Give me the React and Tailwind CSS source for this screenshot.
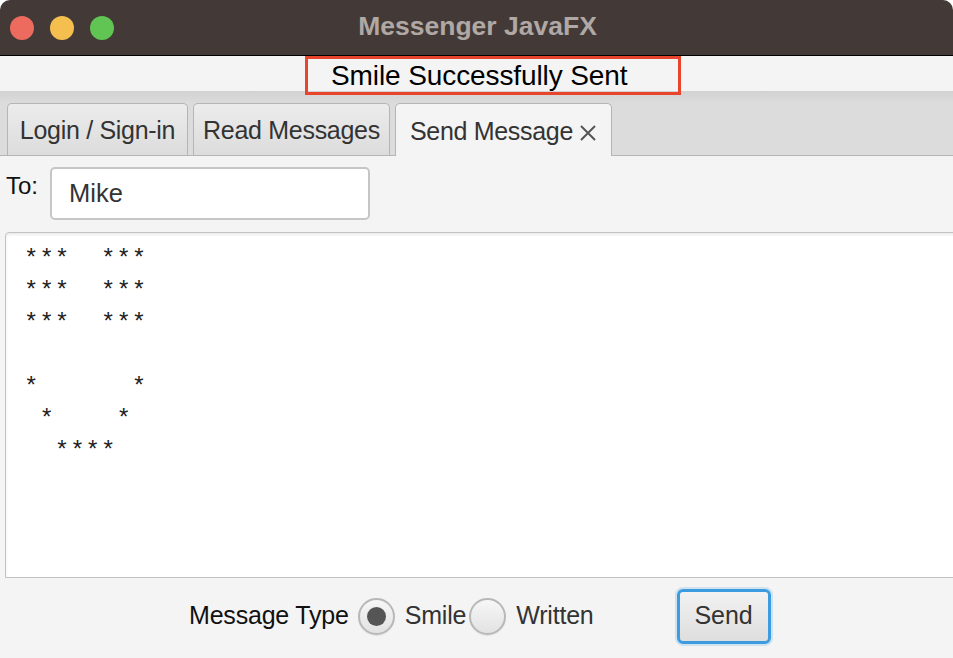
import { useState } from "react";

const smile = ["***  ***", "***  ***", "***  ***", "", "*      *", " *    *", "  ****"];

const Tab = ({ label, active, closable, width }) => (
  <div
    className={
      "h-[52px] shrink-0 flex items-center justify-center gap-[6px] pt-[3px] rounded-t-[5px] border border-b-0 border-[#b5b5b5] text-[25px] tracking-[-0.3px] text-[#333] " +
      width +
      (active ? " bg-[#f4f4f4] h-[53px] mb-[-1px] relative z-10" : " bg-gradient-to-b from-[#ececec] to-[#dcdcdc]")
    }
  >
    <span>{label}</span>
    {closable ? (
      <svg width="18" height="18" viewBox="0 0 18 18" className="mt-[2px]">
        <path d="M2 2 L16 16 M16 2 L2 16" stroke="#555" strokeWidth="2" />
      </svg>
    ) : null}
  </div>
);

const Radio = ({ checked }) => (
  <div className="w-[37px] h-[37px] rounded-full border-[2px] border-[#b8b8b8] bg-gradient-to-b from-[#f7f7f7] to-[#e2e2e2] flex items-center justify-center shadow-[0_1px_1px_rgba(0,0,0,0.08)]">
    {checked ? <div className="w-[19px] h-[19px] rounded-full bg-[#555]" /> : null}
  </div>
);

export default function App() {
  let [to, setTo] = useState("Mike");
  let [type, setType] = useState("smile");

  return (
    <div
      className="w-[953px] h-[658px] bg-[#f4f4f4] flex flex-col overflow-hidden rounded-t-[10px]"
      style={{ fontFamily: '"Liberation Sans", Arial, sans-serif' }}
    >
      {/* title bar */}
      <div className="h-[56px] bg-[#433a37] border-b border-black flex items-center relative shrink-0">
        <div className="flex gap-[16px] pl-[10px]">
          <div className="w-[24px] h-[24px] rounded-full bg-[#ed6a5e]" />
          <div className="w-[24px] h-[24px] rounded-full bg-[#f5bf4f]" />
          <div className="w-[24px] h-[24px] rounded-full bg-[#61c554]" />
        </div>
        <div className="absolute inset-0 flex items-center justify-center pl-[2px] pb-[2px] text-[26.5px] font-bold text-[#b0a8a5]">
          Messenger JavaFX
        </div>
      </div>

      {/* status */}
      <div className="h-[35px] shrink-0 flex pl-[305px]">
        <div className="relative z-20 w-[376px] h-[39px] border-[3px] border-[#e8452c] flex items-center pl-[23px] text-[28px] text-black tracking-[-0.1px]">
          Smile Successfully Sent
        </div>
      </div>

      {/* tab header */}
      <div className="h-[65px] shrink-0 bg-gradient-to-b from-[#d2d2d2] to-[#dcdcdc] to-[20%] border-b border-[#b5b5b5] flex items-end gap-[5px] pl-[7px]">
        <Tab label="Login / Sign-in" width="w-[181px]" />
        <Tab label="Read Messages" width="w-[197px]" />
        <Tab label="Send Message" width="w-[217px]" active closable />
      </div>

      {/* content */}
      <div className="flex-1 flex flex-col">
        <div className="flex items-start pt-[12px] pl-[6px] gap-[12px] h-[76px] shrink-0">
          <span className="text-[24px] text-[#111]">To:</span>
          <input
            value={to}
            onChange={(e) => setTo(e.target.value)}
            className="w-[320px] h-[53px] mt-[-1px] bg-white rounded-[5px] border-[2px] border-[#c6c6c6] px-[17px] text-[25.5px] text-[#333] outline-none"
          />
        </div>

        <div className="ml-[5px] mr-[-4px] h-[346px] shrink-0 bg-white border border-[#c2c2c2] rounded-tl-[4px] shadow-[inset_0_2px_3px_rgba(0,0,0,0.08)] pt-[11px] pl-[18px]">
          {smile.map((line, i) => (
            <div
              key={i}
              className="h-[32px] whitespace-pre text-[24px] leading-[32px] tracking-[1px] text-[#222]"
              style={{ fontFamily: '"Liberation Mono", monospace' }}
            >
              {line}
            </div>
          ))}
        </div>

        <div className="flex-1 flex items-center pl-[189px] pb-[4px]">
          <span className="text-[25px] text-[#111] tracking-[-0.2px]">Message Type</span>
          <div className="ml-[9px] flex items-center cursor-pointer" onClick={() => setType("smile")}>
            <Radio checked={type == "smile"} />
            <span className="ml-[10px] text-[25px] text-[#333] tracking-[-0.2px]">Smile</span>
          </div>
          <div className="ml-[3px] flex items-center cursor-pointer" onClick={() => setType("written")}>
            <Radio checked={type == "written"} />
            <span className="ml-[10px] text-[25px] text-[#333] tracking-[-0.2px]">Written</span>
          </div>
          <button className="ml-[83px] w-[94px] h-[55px] rounded-[6px] border-[3px] border-[#3d9be0] shadow-[0_0_0_2px_rgba(61,155,224,0.2)] bg-gradient-to-b from-[#f2f2f2] to-[#dedede] text-[25px] text-[#333]">
            Send
          </button>
        </div>
      </div>
    </div>
  );
}
